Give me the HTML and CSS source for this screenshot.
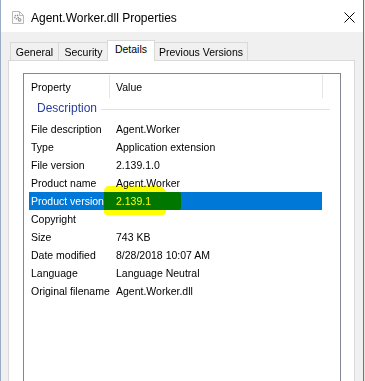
FILE: index.html
```html
<!DOCTYPE html>
<html lang="en">
<head>
	<meta charset="UTF-8"/>
	<meta name="viewport" content="width=device-width, initial-scale=1.0" />
	<title>Agent.Worker.dll Properties</title>
	<link rel="stylesheet" href="styles.css">
</head>
<body>

<div class="desktop">
<div class="window">

	<div class="titlebar">
		<svg class="app-icon" width="12" height="13" viewBox="0 0 12 13">
			<path d="M0.5 0.5 H7.5 L11.5 4.5 V12.5 H0.5 Z" fill="#fbfbfb" stroke="#b9b9b9"/>
			<path d="M7.5 0.5 V4.5 H11.5" fill="none" stroke="#b9b9b9"/>
			<circle cx="4.5" cy="6" r="1.8" fill="none" stroke="#8a8a8a" stroke-width="1.3" stroke-dasharray="1.2 0.8"/>
			<circle cx="7.6" cy="8.8" r="1.3" fill="none" stroke="#9a9a9a" stroke-width="1.1"/>
		</svg>
		<span class="title">Agent.Worker.dll Properties</span>
		<svg class="close" width="11" height="11" viewBox="0 0 11 11">
			<path d="M0.5 0.5 L10.5 10.5 M10.5 0.5 L0.5 10.5" stroke="#000" stroke-width="1"/>
		</svg>
	</div>

	<div class="dialog">
		<div class="tabs">
			<div class="tab tab-general">General</div>
			<div class="tab tab-security">Security</div>
			<div class="tab tab-details active">Details</div>
			<div class="tab tab-previous">Previous Versions</div>
		</div>

		<div class="panel">
			<div class="listview">
				<div class="lv-header">
					<div class="col col-prop">Property</div>
					<div class="col col-val">Value</div>
				</div>

				<div class="group">
					<span class="group-name">Description</span>
					<span class="group-line"></span>
				</div>

				<div class="row"><span class="k">File description</span><span class="v">Agent.Worker</span></div>
				<div class="row"><span class="k">Type</span><span class="v">Application extension</span></div>
				<div class="row"><span class="k">File version</span><span class="v">2.139.1.0</span></div>
				<div class="row"><span class="k">Product name</span><span class="v">Agent.Worker</span></div>
				<div class="row selected">
					<span class="k">Product version</span><span class="v">2.139.1</span>
					<span class="marker marker-wide"></span>
					<span class="marker marker-bar"></span>
				</div>
				<div class="row"><span class="k">Copyright</span><span class="v"></span></div>
				<div class="row"><span class="k">Size</span><span class="v">743 KB</span></div>
				<div class="row"><span class="k">Date modified</span><span class="v">8/28/2018 10:07 AM</span></div>
				<div class="row"><span class="k">Language</span><span class="v">Language Neutral</span></div>
				<div class="row"><span class="k">Original filename</span><span class="v">Agent.Worker.dll</span></div>
			</div>
		</div>
	</div>

</div>
</div>

</body>
</html>
```

FILE: styles.css
```css
	html {
		font-family: "Segoe UI", "Liberation Sans", Arial, sans-serif;
		font-size: 10.5px;
		color: #000;
	}
	body {
		margin: 0;
		padding: 0;
		overflow: hidden;
	}
	.desktop {
		display: flex;
		height: 381px;
		overflow: hidden;
		background: linear-gradient(90deg, #9aaac2 0, #9aaac2 1px, #e9e6e2 1px);
	}
	.window {
		display: flex;
		flex-direction: column;
		width: 362px;
		margin-left: 1px;
		border-right: 1px solid #3a7fd2;
		background: #f0f0f0;
	}

	/* title bar */
	.titlebar {
		display: flex;
		align-items: flex-start;
		height: 32px;
		flex: none;
		background: #fff;
		padding-left: 11px;
	}
	.app-icon {
		margin-top: 11px;
		flex: none;
	}
	.title {
		font-family: "Liberation Sans", Arial, sans-serif;
		font-size: 12px;
		line-height: 16px;
		padding-top: 10px;
		margin-left: 7px;
	}
	.close {
		margin-left: auto;
		margin-right: 8px;
		margin-top: 12px;
		flex: none;
	}

	/* tabs + page */
	.dialog {
		flex: 1;
		display: flex;
		flex-direction: column;
		padding: 0 8px 0 7px;
	}
	.tabs {
		display: flex;
		align-items: flex-end;
		height: 28px;
		flex: none;
		padding-left: 2px;
	}
	.tab {
		box-sizing: border-box;
		height: 18px;
		padding-top: 2px;
		line-height: 15px;
		text-align: center;
		white-space: nowrap;
		border: 1px solid #d9d9d9;
		border-bottom: 0;
		background: #f0f0f0;
		margin-right: -1px;
	}
	.tab-general { width: 49px; }
	.tab-security { width: 51px; }
	.tab-details { width: 48px; }
	.tab-previous { width: 94px; }
	.tab.active {
		height: 21px;
		padding-top: 1px;
		margin-left: -1px;
		margin-bottom: -1px;
		background: #fff;
		position: relative;
		z-index: 1;
	}

	.panel {
		height: 400px;
		flex: none;
		border: 1px solid #d9d9d9;
		background: #fff;
	}
	.listview {
		height: 330px;
		margin: 12px 13px 0 14px;
		border: 1px solid #828790;
		background: #fff;
	}

	.lv-header {
		display: flex;
		padding-top: 1px;
	}
	.col {
		box-sizing: border-box;
		height: 23px;
		padding-top: 2px;
		line-height: 20px;
		border-right: 1px solid #e5e5e5;
	}
	.col-prop {
		width: 86px;
		padding-left: 7px;
	}
	.col-val {
		width: 213px;
		padding-left: 6px;
	}

	.group {
		display: flex;
		height: 22px;
		padding-left: 13px;
	}
	.group-name {
		font-family: "Liberation Sans", Arial, sans-serif;
		font-size: 12px;
		line-height: 20px;
		color: #2a3da0;
	}
	.group-line {
		flex: 1;
		height: 1px;
		margin: 11px 10px 0 4px;
		background: #dbe2f0;
	}

	.row {
		display: flex;
		height: 18px;
		line-height: 18px;
		margin: 0 18px 0 5px;
		padding-left: 2px;
		white-space: nowrap;
	}
	.row .k {
		width: 85px;
		flex: none;
	}
	.row.selected {
		background: #0078d7;
		color: #fff;
		position: relative;
	}

	/* yellow highlighter stroke drawn over the screenshot */
	.marker {
		position: absolute;
		background: #ffff00;
		mix-blend-mode: multiply;
	}
	.marker-wide {
		left: 75px;
		top: -6px;
		width: 62px;
		height: 29px;
		border-radius: 5px 8px 4px 3px;
	}
	.marker-bar {
		left: 77px;
		top: 0;
		width: 75px;
		height: 18px;
		border-radius: 2px;
	}
```
